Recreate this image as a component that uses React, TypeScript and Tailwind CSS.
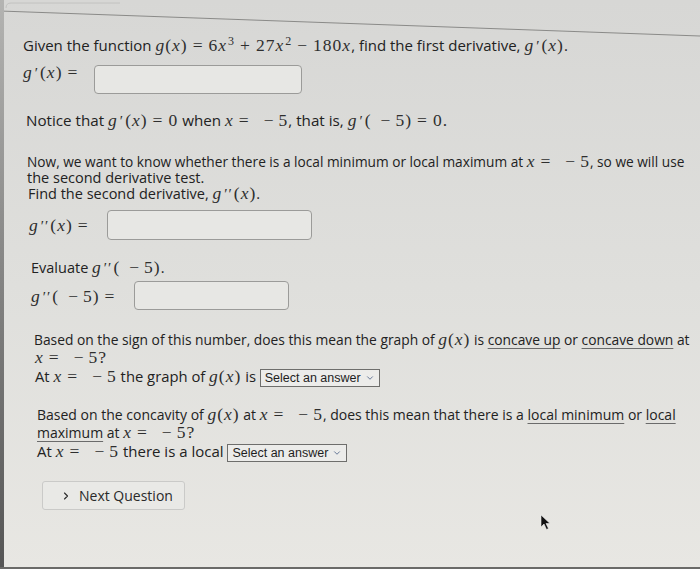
import type { ReactNode } from 'react'
import { ChevronRight, ChevronDown } from 'lucide-react'

// math bits, roughly MathJax-looking
function M({ children }: { children: ReactNode }) {
  return (
    <span className="font-['Liberation_Serif',serif] text-[17.5px] font-normal leading-[14px] tracking-[1px] text-[#2e2e2e]">
      {children}
    </span>
  )
}
const V = ({ children }: { children: ReactNode }) => <i>{children}</i>
const Eq = () => <span className="mx-[5px]">=</span>
const Op = ({ c }: { c: string }) => <span className="mx-[5px]">{c}</span>
const Neg5 = () => (
  <>
    <span className="ml-[9px] mr-[4px]">−</span>5
  </>
)
const Gx = () => (
  <>
    <V>g</V>(<V>x</V>)
  </>
)
const G1 = () => (
  <>
    <V>g</V>
    <span className="ml-[2px] mr-[1px] text-[15px]">′</span>
  </>
)
const G2 = () => (
  <>
    <V>g</V>
    <span className="ml-[2px] mr-[1px] text-[15px]">′′</span>
  </>
)
const Sup = ({ n }: { n: string }) => <sup className="text-[12px] ml-[1px]">{n}</sup>

function AnswerBox({ w }: { w: string }) {
  return <div className={`${w} rounded-[4px] border border-[#9b9b99] bg-[#e7e7e4]`} />
}

function Select() {
  return (
    <span className="inline-flex items-center gap-[4px] border border-[#6e6e6c] bg-[#ececea] px-[4px] h-[18px] align-middle font-['Liberation_Sans',sans-serif] text-[12.5px] font-normal leading-none text-[#1e1e1e]">
      Select an answer
      <ChevronDown size={10} strokeWidth={2.2} className="text-[#5b6d90]" />
    </span>
  )
}

function Term({ children }: { children: ReactNode }) {
  return <span className="underline decoration-[#6b6b6b] decoration-1 underline-offset-[3px]">{children}</span>
}

export default function App() {
  return (
    <div className="relative w-[700px] h-[569px] overflow-hidden bg-linear-to-b from-[#d7d7d5] via-[#dfdfdc] to-[#e8e7e3] font-['Open_Sans',sans-serif] font-medium text-[#222]">
      {/* edge of the screen bezel in the photo */}
      <svg className="absolute left-0 top-0" width="700" height="40">
        <line x1="0" y1="11" x2="700" y2="36" stroke="#8a8a88" strokeWidth="1" />
        <path d="M6 8 Q6 3 11 3 L120 3" fill="none" stroke="#c2c2c0" strokeWidth="1" />
      </svg>
      <div className="absolute left-0 top-0 bottom-0 w-[4px] bg-linear-to-b from-[#b4b4b2] to-[#555]" />
      <div className="absolute left-0 right-0 bottom-0 h-[2px] bg-[#6a6a68]" />

      <div className="pt-[37px]">
        <div className="pl-[23px] h-[16px] leading-[16px] whitespace-nowrap text-[15px]">
          Given the function{' '}
          <M>
            <Gx />
            <Eq />6<V>x</V>
            <Sup n="3" />
            <Op c="+" />
            27<V>x</V>
            <Sup n="2" />
            <Op c="−" />
            180<V>x</V>
          </M>
          , find the first derivative,{' '}
          <M>
            <G1 />(<V>x</V>)
          </M>
          .
        </div>

        <div className="mt-[12px] pl-[23px] flex items-start">
          <div className="mt-[-1px] h-[16px] leading-[16px] whitespace-nowrap">
            <M>
              <G1 />(<V>x</V>)<Eq />
            </M>
          </div>
          <div className="ml-[11px]">
            <AnswerBox w="w-[208px] h-[29px]" />
          </div>
        </div>

        <div className="mt-[18px] pl-[26px] h-[16px] leading-[16px] whitespace-nowrap text-[15.2px]">
          Notice that{' '}
          <M>
            <G1 />(<V>x</V>)<Eq />0
          </M>{' '}
          when{' '}
          <M>
            <V>x</V>
            <Eq />
            <Neg5 />
          </M>
          , that is,{' '}
          <M>
            <G1 />(<Neg5 />)<Eq />0.
          </M>
        </div>

        <div className="mt-[26px] pl-[27px] whitespace-nowrap text-[13.7px]">
          <div className="h-[16px] leading-[16px]">
            Now, we want to know whether there is a local minimum or local maximum at{' '}
            <M>
              <V>x</V>
              <Eq />
              <Neg5 />
            </M>
            , so we will use
          </div>
          <div className="h-[16px] leading-[16px] text-[14.5px]">the second derivative test.</div>
          <div className="h-[16px] leading-[16px] pl-[1px] text-[14.5px]">
            Find the second derivative,{' '}
            <M>
              <G2 />(<V>x</V>)
            </M>
            .
          </div>
        </div>

        <div className="mt-[8px] pl-[29px] flex items-center">
          <div className="h-[16px] leading-[16px] whitespace-nowrap">
            <M>
              <G2 />(<V>x</V>)<Eq />
            </M>
          </div>
          <div className="ml-[13px]">
            <AnswerBox w="w-[205px] h-[30px]" />
          </div>
        </div>

        <div className="mt-[20px] pl-[31px] h-[16px] leading-[16px] whitespace-nowrap text-[14.5px]">
          Evaluate{' '}
          <M>
            <G2 />(<Neg5 />)
          </M>
          .
        </div>

        <div className="mt-[5px] pl-[31px] flex items-center">
          <div className="h-[16px] leading-[16px] whitespace-nowrap">
            <M>
              <G2 />(<Neg5 />)<Eq />
            </M>
          </div>
          <div className="ml-[14px]">
            <AnswerBox w="w-[155px] h-[29px]" />
          </div>
        </div>

        <div className="mt-[21px] pl-[34px] whitespace-nowrap text-[13.8px]">
          <div className="h-[18px] leading-[18px]">
            Based on the sign of this number, does this mean the graph of{' '}
            <M>
              <Gx />
            </M>{' '}
            is <Term>concave up</Term> or <Term>concave down</Term> at
          </div>
          <div className="h-[18px] leading-[18px] pl-[1px]">
            <M>
              <V>x</V>
              <Eq />
              <Neg5 />?
            </M>
          </div>
          <div className="h-[18px] leading-[18px] pl-[1px] text-[14.8px]">
            At{' '}
            <M>
              <V>x</V>
              <Eq />
              <Neg5 />
            </M>{' '}
            the graph of{' '}
            <M>
              <Gx />
            </M>{' '}
            is <Select />
          </div>
        </div>

        <div className="mt-[21px] pl-[37px] whitespace-nowrap text-[14px]">
          <div className="h-[18px] leading-[18px]">
            Based on the concavity of{' '}
            <M>
              <Gx />
            </M>{' '}
            at{' '}
            <M>
              <V>x</V>
              <Eq />
              <Neg5 />
            </M>
            , does this mean that there is a <Term>local minimum</Term> or <Term>local</Term>
          </div>
          <div className="h-[18px] leading-[18px]">
            <Term>maximum</Term> at{' '}
            <M>
              <V>x</V>
              <Eq />
              <Neg5 />?
            </M>
          </div>
          <div className="h-[18px] leading-[18px] text-[15px]">
            At{' '}
            <M>
              <V>x</V>
              <Eq />
              <Neg5 />
            </M>{' '}
            there is a local <Select />
          </div>
        </div>

        <div className="mt-[21px] pl-[42px]">
          <button className="h-[29px] w-[143px] flex items-center gap-[7px] pl-[17px] whitespace-nowrap rounded-[3px] border border-[#cacac8] bg-[#e9e9e6] text-[14px] text-[#2a2a2a]">
            <ChevronRight size={12} strokeWidth={2.2} />
            Next Question
          </button>
        </div>
      </div>

      {/* mouse pointer */}
      <svg className="absolute left-[540px] top-[514px]" width="12" height="17" viewBox="0 0 12 17">
        <path d="M1 1 L1 13 L4 10 L6.5 15.5 L8.5 14.5 L6 9.5 L10 9.5 Z" fill="#111" stroke="#eee" strokeWidth="0.6" />
      </svg>
    </div>
  )
}
